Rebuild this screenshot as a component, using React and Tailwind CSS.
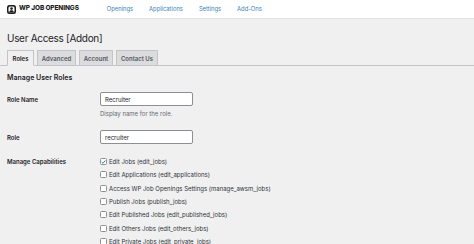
import React from "react";

const caps = [
  { label: "Edit Jobs (edit_jobs)", checked: true },
  { label: "Edit Applications (edit_applications)" },
  { label: "Access WP Job Openings Settings (manage_awsm_jobs)" },
  { label: "Publish Jobs (publish_jobs)" },
  { label: "Edit Published Jobs (edit_published_jobs)" },
  { label: "Edit Others Jobs (edit_others_jobs)" },
  { label: "Edit Private Jobs (edit_private_jobs)" },
];

const tabs = [
  { label: "Roles", w: "w-[27px]" },
  { label: "Advanced", w: "w-[39px]" },
  { label: "Account", w: "w-[34px]" },
  { label: "Contact Us", w: "w-[42px]" },
];

function Logo() {
  return (
    <svg width="9" height="9" viewBox="0 0 18 18">
      <rect x="0" y="0" width="18" height="18" rx="5" fill="#1d1d1d" />
      <rect x="3" y="3" width="12" height="12" rx="3" fill="#fff" />
      <circle cx="9" cy="7.2" r="2.6" fill="#1d1d1d" />
      <path d="M4.2 15 C4.6 11.6 6.6 10.6 9 10.6 C11.4 10.6 13.4 11.6 13.8 15 Z" fill="#1d1d1d" />
    </svg>
  );
}

function Checkbox({ checked }) {
  return (
    <span className="w-[7px] h-[7px] rounded-[1.5px] border border-[#8c8f94] bg-white flex items-center justify-center shrink-0">
      {checked && (
        <svg width="6" height="6" viewBox="0 0 10 10">
          <path d="M1.5 5.2 L4 7.6 L8.6 2" fill="none" stroke="#2271b1" strokeWidth="1.8" />
        </svg>
      )}
    </span>
  );
}

export default function App() {
  return (
    <div className="w-[474px] h-[244px] overflow-hidden bg-[#f0f0f0] text-[#1d2327] font-['Inter','Noto_Sans',sans-serif]">
      {/* top bar */}
      <header className="h-[19px] bg-white border-b border-[#e2e2e2] flex items-center pl-[7px]">
        <Logo />
        <span className="ml-[3px] text-[6.5px] font-extrabold tracking-[-0.1px] text-[#1d1d1d]">WP JOB OPENINGS</span>
        <nav className="ml-[28px] flex items-center gap-[16px] text-[5.8px] text-[#3b82b9]">
          <span>Openings</span>
          <span>Applications</span>
          <span>Settings</span>
          <span>Add-Ons</span>
        </nav>
      </header>

      <main className="px-[7px]">
        <h1 className="mt-[11px] text-[10px] tracking-[-0.3px] leading-[16px] font-normal text-[#1d2327]">User Access [Addon]</h1>

        {/* tabs */}
        <div className="mt-[4px] -mx-[7px] px-[7px] flex items-end gap-[3px] border-b border-[#c3c4c7] h-[16px]">
          {tabs.map((t, i) => (
            <div
              key={t.label}
              className={
                i === 0
                  ? `${t.w} h-[16px] -mb-px flex items-center justify-center text-[6px] font-semibold border border-[#c3c4c7] border-b-[#f0f0f0] bg-[#f0f0f0] text-[#1d2327]`
                  : `${t.w} h-[15px] flex items-center justify-center text-[6px] font-semibold border border-[#c3c4c7] border-b-0 bg-[#dcdcde] text-[#50575e]`
              }
            >
              {t.label}
            </div>
          ))}
        </div>

        <h2 className="mt-[7px] text-[7px] font-semibold leading-[10px]">Manage User Roles</h2>

        <div className="grid grid-cols-[93px_1fr] mt-[9px] text-[6px]">
          <div className="font-semibold flex items-center h-[14px]">Role Name</div>
          <div>
            <div className="w-[93px] h-[14px] bg-white border border-[#8c8f94] rounded-[2px] flex items-center px-[4px]">Recruiter</div>
            <div className="mt-[3px] text-[#646970] leading-[9px]">Display name for the role.</div>
          </div>

          <div className="font-semibold flex items-center h-[14px] mt-[12px]">Role</div>
          <div className="mt-[12px] w-[93px] h-[14px] bg-white border border-[#8c8f94] rounded-[2px] flex items-center px-[4px]">recruiter</div>

          <div className="font-semibold mt-[11px] leading-[13.33px]">Manage Capabilities</div>
          <div className="mt-[11px] flex flex-col">
            {caps.map((c) => (
              <div key={c.label} className="h-[13.33px] flex items-center gap-[2px] text-[#2c3338]">
                <Checkbox checked={c.checked} />
                <span>{c.label}</span>
              </div>
            ))}
          </div>
        </div>
      </main>
    </div>
  );
}
